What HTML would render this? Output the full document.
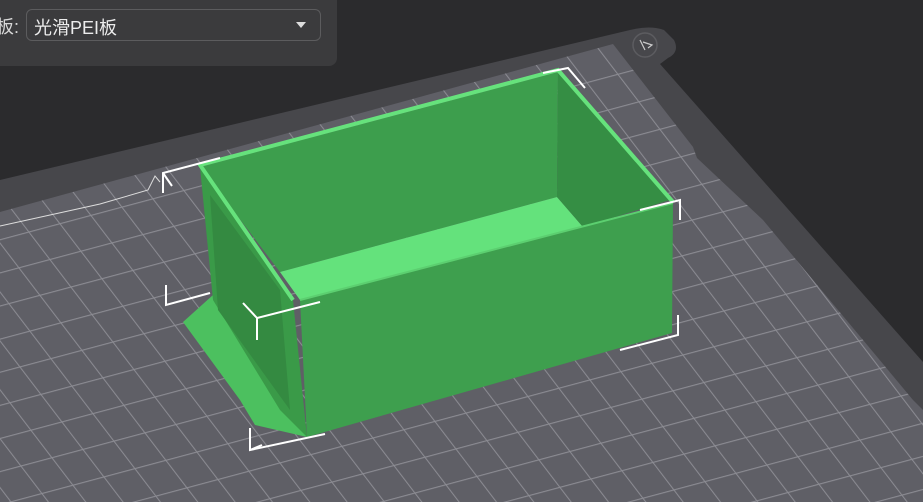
<!DOCTYPE html>
<html><head><meta charset="utf-8"><style>
html,body{margin:0;padding:0;width:923px;height:502px;overflow:hidden;background:#2b2b2d;font-family:"Liberation Sans","Noto Sans CJK SC",sans-serif}
svg{position:absolute;left:0;top:0}
.panel{position:absolute;left:0;top:0;width:337px;height:66px;background:#3b3b3d;border-bottom-right-radius:8px}
.lbl{position:absolute;left:-4px;top:13px;color:#d8d8d8;font-size:18px}
.dd{position:absolute;left:26px;top:9px;width:295px;height:32px;border:1.5px solid #5c5c5e;border-radius:6px;box-sizing:border-box}
.dd span{position:absolute;left:7px;top:4px;color:#ececec;font-size:18px}
.dd i{position:absolute;right:14px;top:12px;width:0;height:0;border-left:5px solid transparent;border-right:5px solid transparent;border-top:6px solid #ddd}
</style></head><body>
<svg width="923" height="502" viewBox="0 0 923 502">
<defs>
<pattern id="g" patternUnits="userSpaceOnUse" width="1" height="1" patternTransform="matrix(31 -8.3 21 27.5 5 6)">
<rect width="1" height="1" fill="#5f5f66"/>
<rect width="1" height="0.035" fill="#8b8b92"/>
<rect width="0.035" height="1" fill="#8b8b92"/>
</pattern>
</defs>
<path d="M0 180 L630 30 Q650 25 664 30 L674 40 Q680 52 668 58 L660 64 L923 362 L923 502 L0 502 Z" fill="#47474b"/>
<path d="M0 212 L613 44 L693 147 L697 158 L763 220 L913 400 L923 410 L923 502 L0 502 Z" fill="url(#g)"/>
<circle cx="645" cy="45" r="12" fill="none" stroke="#5c5c60" stroke-width="1.5"/>
<path d="M640 40 L645 50 M643 42 L652 45 L648 48" stroke="#ccc" stroke-width="1.2" fill="none"/>
<path d="M0 226 L100 204 L148 190 L155 176 L160 182" stroke="#ddd" stroke-width="1" fill="none"/>
<polygon points="183,322 213,295 300,420 307,437 255,425 240,400" fill="#4cc05f"/>
<polygon points="200,167 293,300 307,437 280,410 213,300" fill="#3a9a48"/>
<polygon points="210,195 280,290 290,410 218,310" fill="#348a41"/>
<polygon points="300,300 673,203 672,333 307,437" fill="#3e9f4e"/>
<polygon points="200,167 558,72 557,197 280,272" fill="#3d9e4d"/>
<polygon points="280,272 557,197 583,227 300,300" fill="#64e27c"/>
<polygon points="558,73 670,200 583,227 557,197" fill="#358e44"/>
<polyline points="293,300 200,165 558,70 673,202" fill="none" stroke="#66e27c" stroke-width="4"/>
<line x1="300" y1="300" x2="673" y2="203" stroke="#5ccf70" stroke-width="2"/>
<g stroke="#fff" stroke-width="2" fill="none">
<path d="M220 158 L163 173 L163 193 M163 173 L172 186"/>
<path d="M166 285 L166 305 L210 293"/>
<path d="M320 302 L257 318 L257 340 M257 318 L243 303"/>
<path d="M250 428 L250 450 L325 434 M250 450 L262 445"/>
<path d="M640 210 L680 200 L680 220"/>
<path d="M678 315 L678 335 L620 350"/>
<path d="M543 73 L568 68 L585 88"/>
</g>
</svg>
<div class="panel"><div class="lbl">板:</div><div class="dd"><span>光滑PEI板</span><i></i></div></div>
</body></html>
